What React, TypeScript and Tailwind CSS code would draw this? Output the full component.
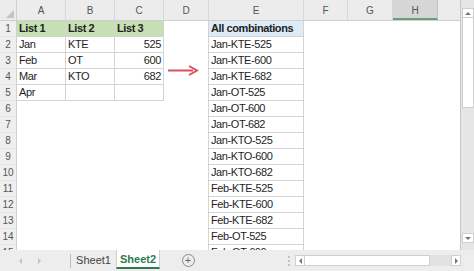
import React from "react";

// column widths of the visible sheet area
const cols = [
  { key: "A", w: "w-[49px]" },
  { key: "B", w: "w-[49px]" },
  { key: "C", w: "w-[49px]" },
  { key: "D", w: "w-[45px]" },
  { key: "E", w: "w-[95px]" },
  { key: "F", w: "w-[44px]" },
  { key: "G", w: "w-[45px]" },
  { key: "H", w: "w-[45px]" },
];

const lists = [
  ["List 1", "List 2", "List 3"],
  ["Jan", "KTE", "525"],
  ["Feb", "OT", "600"],
  ["Mar", "KTO", "682"],
  ["Apr", "", ""],
];

const combos = [
  "All combinations",
  "Jan-KTE-525",
  "Jan-KTE-600",
  "Jan-KTE-682",
  "Jan-OT-525",
  "Jan-OT-600",
  "Jan-OT-682",
  "Jan-KTO-525",
  "Jan-KTO-600",
  "Jan-KTO-682",
  "Feb-KTE-525",
  "Feb-KTE-600",
  "Feb-KTE-682",
  "Feb-OT-525",
  "Feb-OT-600",
];

function HeaderRow() {
  return (
    <div className="flex h-[21px] bg-[#ececec] border-b border-[#cfcfcf] text-[10px] text-[#555]">
      <div className="w-[17px] relative border-r border-[#d0d0d0]">
        <div className="absolute right-[2px] bottom-[2px] w-0 h-0 border-l-[8px] border-l-transparent border-b-[8px] border-b-[#c4c4c4]" />
      </div>
      {cols.map((c) =>
        c.key === "H" ? (
          <div
            key={c.key}
            className={`${c.w} flex items-center justify-center bg-[#d6d6d6] border-r border-[#c4c4c4] border-b-2 border-b-[#6f9a7c] pt-[2px]`}
          >
            {c.key}
          </div>
        ) : (
          <div
            key={c.key}
            className={`${c.w} flex items-center justify-center border-r border-[#d8d8d8] pt-[1px]`}
          >
            {c.key}
          </div>
        )
      )}
      <div className="flex-1" />
    </div>
  );
}

function Row({ n }: { n: number }) {
  const i = n - 1;
  const list = lists[i];
  const combo = combos[i];
  const head = n === 1;
  return (
    <div className="flex h-[16px] text-[11px] tracking-[-0.4px] text-[#1e1e1e]">
      <div className="w-[17px] shrink-0 bg-[#efefef] border-r border-[#cfcfcf] border-b border-b-[#e4e4e4] flex items-center justify-center text-[10px] tracking-normal text-[#555]">
        {n}
      </div>
      {[0, 1, 2].map((j) =>
        list ? (
          <div
            key={j}
            className={`w-[49px] shrink-0 border-r border-b border-[#d4d4d4] flex items-center px-[2px] ${
              head ? "bg-[#c6e0b4] font-bold" : ""
            } ${j === 2 && !head ? "justify-end" : ""}`}
          >
            {list[j]}
          </div>
        ) : (
          <div key={j} className="w-[49px] shrink-0" />
        )
      )}
      <div className="w-[45px] shrink-0 border-r border-[#d4d4d4]" />
      <div
        className={`w-[95px] shrink-0 border-r border-b border-[#d4d4d4] flex items-center px-[2px] ${
          head ? "bg-[#ddebf7] font-bold" : ""
        }`}
      >
        {combo}
      </div>
      <div className="flex-1" />
    </div>
  );
}

function TabBar() {
  return (
    <div className="h-[21px] flex items-stretch bg-[#ededed] text-[11px] text-[#444]">
      <div className="w-[70px] flex items-center gap-[16px] pl-[19px]">
        <div className="w-0 h-0 border-y-[3px] border-y-transparent border-r-[3px] border-r-[#c2c2c2]" />
        <div className="w-0 h-0 border-y-[3px] border-y-transparent border-l-[3px] border-l-[#c2c2c2]" />
      </div>
      <div className="flex items-center">
        <div className="w-px h-[14px] bg-[#bdbdbd]" />
      </div>
      <div className="w-[45px] flex items-center justify-center">Sheet1</div>
      <div className="w-[44px] flex items-center justify-center bg-white border-x border-[#cfcfcf] border-b-2 border-b-[#2e7a4c] text-[#2e7a4c] font-bold mb-[2px] pt-[1px]">
        Sheet2
      </div>
      <div className="w-[56px] flex items-center justify-center">
        <div className="w-[13px] h-[13px] rounded-full border border-[#8a8a8a] flex items-center justify-center text-[11px] leading-none text-[#666]">
          +
        </div>
      </div>
      <div className="w-[68px]" />
      <div className="flex flex-col justify-center gap-[2px] w-[10px] items-center">
        <div className="w-[2px] h-[2px] bg-[#c2c2c2]" />
        <div className="w-[2px] h-[2px] bg-[#c2c2c2]" />
        <div className="w-[2px] h-[2px] bg-[#c2c2c2]" />
      </div>
      <div className="flex items-center pl-[1px]">
        <div className="w-[10px] h-[11px] bg-white border border-[#cfcfcf] flex items-center justify-center">
          <div className="w-0 h-0 border-y-[3px] border-y-transparent border-r-[3px] border-r-[#777]" />
        </div>
        <div className="w-[125px] h-[11px] bg-white border border-[#cfcfcf] border-l-0" />
        <div className="w-[21px] h-[11px] bg-[#e2e2e2]" />
        <div className="w-[10px] h-[11px] bg-white border border-[#cfcfcf] flex items-center justify-center">
          <div className="w-0 h-0 border-y-[3px] border-y-transparent border-l-[3px] border-l-[#777]" />
        </div>
      </div>
      <div className="flex-1" />
    </div>
  );
}

export default function App() {
  return (
    <div className="w-[474px] h-[271px] overflow-hidden bg-white flex flex-col font-['Liberation_Sans',Arial,sans-serif]">
      <div className="flex h-[250px]">
        <div className="w-[461px] overflow-hidden relative border-r border-[#c8c8c8]">
          <HeaderRow />
          {combos.map((_, i) => (
            <Row key={i} n={i + 1} />
          ))}
          <svg
            className="absolute left-[167px] top-[65px]"
            width="32"
            height="11"
            viewBox="0 0 32 11"
          >
            <line x1="1" y1="5.5" x2="26" y2="5.5" stroke="#d6505f" strokeWidth="2" />
            <path d="M22 1 L30 5.5 L22 10" fill="none" stroke="#d6505f" strokeWidth="2" />
          </svg>
        </div>
        <div className="w-[13px] bg-[#e6e6e6] flex flex-col pt-[8px] pl-[1px]">
          <div className="h-[10px] bg-white border border-[#cfcfcf] flex items-center justify-center">
            <div className="w-0 h-0 border-x-[3px] border-x-transparent border-b-[3px] border-b-[#777]" />
          </div>
          <div className="h-[90px] bg-white border-x border-b border-[#cfcfcf]" />
          <div className="flex-1" />
          <div className="h-[10px] mb-[7px] bg-white border border-[#cfcfcf] flex items-center justify-center">
            <div className="w-0 h-0 border-x-[3px] border-x-transparent border-t-[3px] border-t-[#777]" />
          </div>
        </div>
      </div>
      <TabBar />
    </div>
  );
}
